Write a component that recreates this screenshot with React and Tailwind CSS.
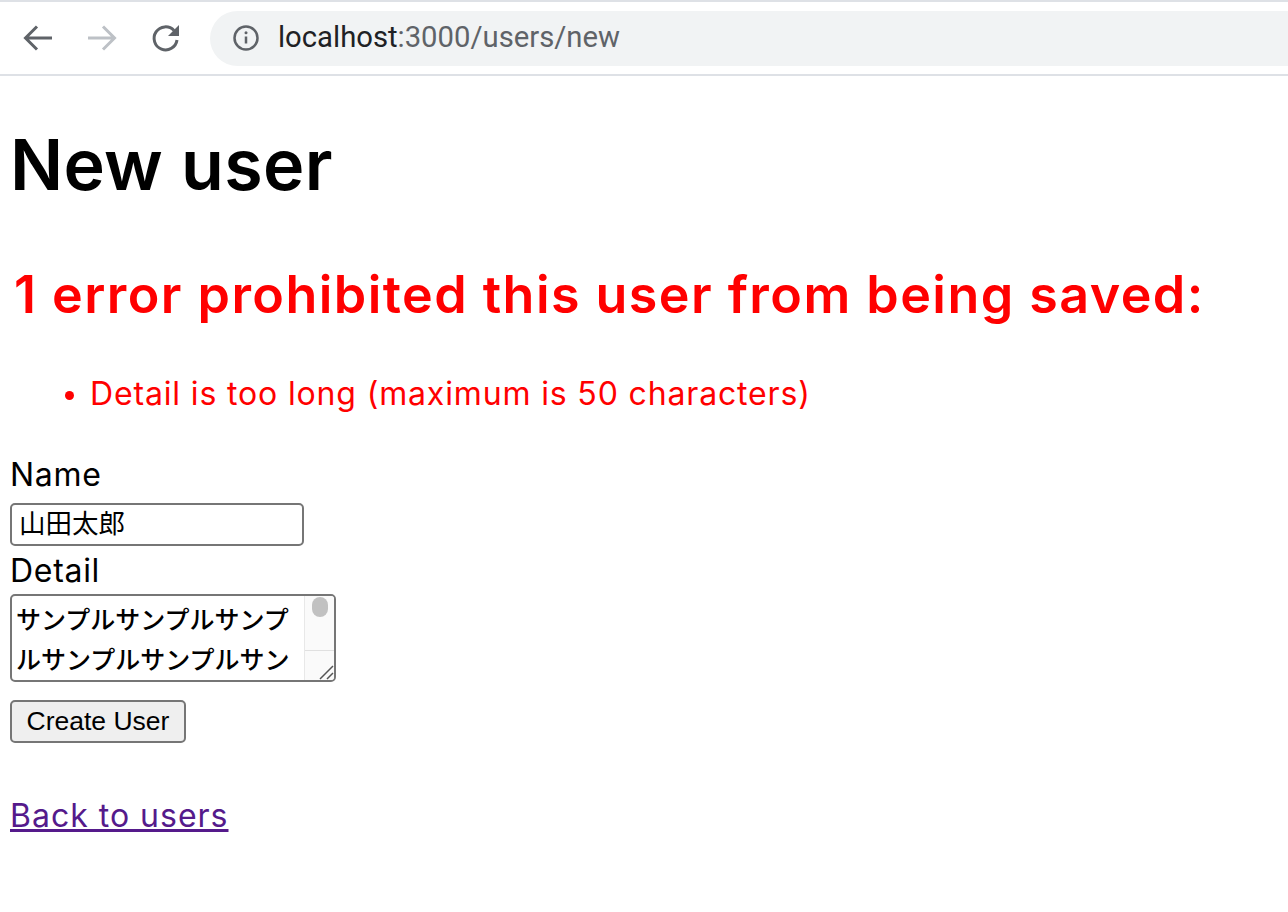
import React from "react";

const latin = "font-['Inter','Noto_Sans_CJK_JP',sans-serif]";
const arial = "font-['Liberation_Sans','Noto_Sans_CJK_JP',sans-serif]";

function BrowserBar() {
  return (
    <div className="h-[76px] border-t-[2px] border-b-[2px] border-[#dee1e6] bg-white flex items-center">
      <div className="flex items-center pl-[22px] gap-[32px] w-[210px]">
        <svg width="32" height="32" viewBox="0 0 32 32" fill="none" stroke="#5f6368" strokeWidth="3" className="shrink-0">
          <path d="M30 16H5M15 4.500L3.500 16 15 27.500" />
        </svg>
        <svg width="32" height="32" viewBox="0 0 32 32" fill="none" stroke="#bdc1c6" strokeWidth="3" className="shrink-0">
          <path d="M2 16h25M17 4.500L28.500 16 17 27.500" />
        </svg>
        <svg width="32" height="32" viewBox="0 0 32 32" fill="none" className="shrink-0">
          <path d="M24 8.500A11.500 11.500 0 1 0 27 18" stroke="#5f6368" strokeWidth="3" />
          <path d="M29 3v11H18z" fill="#5f6368" />
        </svg>
      </div>
      <div className="flex-1 h-[55px] bg-[#f1f3f4] rounded-l-[28px] flex items-center pl-[22px]">
        <svg width="28" height="28" viewBox="0 0 28 28" fill="none" className="shrink-0">
          <circle cx="14" cy="14" r="11.500" stroke="#5f6368" strokeWidth="2.500" />
          <path d="M14 12.500v7" stroke="#5f6368" strokeWidth="2.500" />
          <circle cx="14" cy="8.800" r="1.500" fill="#5f6368" />
        </svg>
        <span className="ml-[18px] font-['Roboto',sans-serif] text-[29.250px] leading-none text-[#202124]">
          localhost<span className="text-[#5f6368]">:3000/users/new</span>
        </span>
      </div>
    </div>
  );
}

export default function App() {
  return (
    <div className={`min-h-[912px] bg-white text-black ${latin}`}>
      <BrowserBar />
      <div className="px-[10px]">
        <h1 className="text-[70px] leading-[90px] font-semibold mt-[44px] tracking-[0.300px]">New user</h1>
        <div className="text-[#ff0000]">
          <h2 className="text-[52px] leading-[60px] font-semibold tracking-[1.450px] mt-[55px] pl-[4px] whitespace-nowrap">
            1 error prohibited this user from being saved:
          </h2>
          <ul className="list-disc pl-[80px] mt-[48px] text-[32px] leading-[42px] tracking-[0.850px] marker:text-[28px]">
            <li>Detail is too long (maximum is 50 characters)</li>
          </ul>
        </div>
        <div className="mt-[39px] text-[32px] leading-[42px] tracking-[0.700px]">Name</div>
        <div className={`mt-[7px] w-[294px] h-[43px] border-[2px] border-[#767676] rounded-[5px] pl-[7px] flex items-center text-[26.500px] ${arial}`}>
          山田太郎
        </div>
        <div className="mt-[4px] text-[32px] leading-[42px] tracking-[0.700px]">Detail</div>
        <div className={`w-[326px] h-[88px] mt-[2px] border-[2px] border-[#767676] rounded-[5px] flex overflow-hidden ${arial}`}>
          <div className="w-[292px] pl-[4px] pt-[4px] text-[25px] leading-[40px] whitespace-nowrap overflow-hidden font-medium">
            サンプルサンプルサンプ
            <br />
            ルサンプルサンプルサン
          </div>
          <div className="flex-1 bg-[#fafafa] border-l border-[#e8e8e8] flex flex-col">
            <div className="h-[54px] flex justify-center pt-[1px]">
              <div className="w-[16px] h-[20px] rounded-full bg-[#c1c1c1]" />
            </div>
            <div className="flex-1 border-t border-[#e0e0e0] flex items-end justify-end">
              <svg width="16" height="16" viewBox="0 0 16 16" stroke="#555" strokeWidth="1.500" fill="none">
                <path d="M2 15L15 2M9 15l6-6" />
              </svg>
            </div>
          </div>
        </div>
        <button className={`block mt-[18px] w-[176px] h-[43px] bg-[#efefef] border-[2px] border-[#767676] rounded-[5px] text-[26.500px] text-black ${arial}`}>
          Create User
        </button>
        <a href="#" className="block w-fit mt-[52px] text-[32px] leading-[42px] tracking-[1px] text-[#551a8b] underline">
          Back to users
        </a>
      </div>
    </div>
  );
}
